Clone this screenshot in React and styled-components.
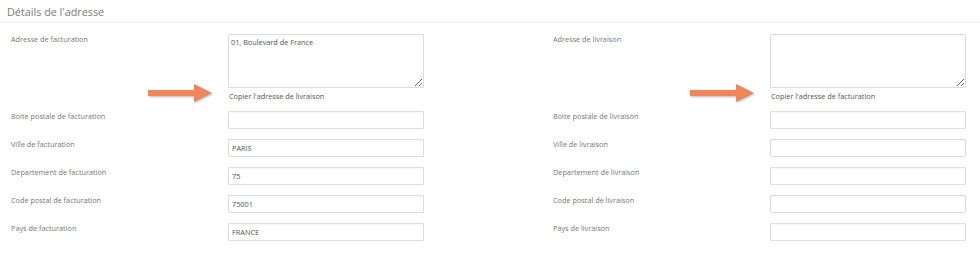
import React from 'react';
import styled, { createGlobalStyle } from 'styled-components';

const GlobalStyle = createGlobalStyle`
  html, body {
    margin: 0;
    padding: 0;
    background: #ffffff;
    font-family: "Open Sans", "Liberation Sans", sans-serif;
  }
`;

const Panel = styled.div`
  width: 980px;
  background: #fff;
`;

const Heading = styled.div`
  height: 23px;
  box-sizing: border-box;
  padding: 4px 0 0 7px;
  font-size: 10.8px;
  line-height: 15px;
  color: #7a7a7a;
  border-bottom: 1px solid #eeeeee;
`;

const Columns = styled.div`
  display: grid;
  grid-template-columns: 542px 1fr;
  padding-top: 11px;
`;

const Column = styled.div`
  display: flex;
  flex-direction: column;
  gap: 10px;
`;

const Row = styled.div`
  display: grid;
  grid-template-columns: 217px 196px;
  padding-left: 11px;
  align-items: start;
`;

const Label = styled.div`
  font-size: 7.3px;
  line-height: 10px;
  color: #777777;
`;

const Field = styled.div`
  position: relative;
  display: flex;
  flex-direction: column;
`;

const TextArea = styled.textarea`
  box-sizing: border-box;
  width: 196px;
  height: 54px;
  margin: 0;
  padding: 2px 2px;
  border: 1px solid #dcdcdc;
  border-radius: 1px;
  font-family: "Open Sans", "Liberation Sans", sans-serif;
  font-size: 7.3px;
  line-height: 10px;
  color: #555;
  resize: vertical;
  outline: none;
`;

const Input = styled.input`
  box-sizing: border-box;
  width: 196px;
  height: 18px;
  margin: 0;
  padding: 0 3px;
  border: 1px solid #dcdcdc;
  border-radius: 1px;
  box-shadow: inset 0 1px 1px rgba(0, 0, 0, 0.03);
  font-family: "Open Sans", "Liberation Sans", sans-serif;
  font-size: 7.3px;
  color: #555;
  outline: none;
`;

const CopyLink = styled.div`
  position: relative;
  margin-top: 3px;
  padding-left: 1px;
  font-size: 7.3px;
  line-height: 10px;
  color: #555555;
  cursor: pointer;
`;

const Arrow = styled.svg`
  position: absolute;
  right: calc(100% + 16px);
  top: -7px;
  width: 64px;
  height: 18px;
  overflow: visible;
  filter: drop-shadow(1px 1px 1px rgba(0, 0, 0, 0.28));
`;

function PointerArrow() {
  return (
    <Arrow viewBox="0 0 64 18">
      <rect x="0" y="6" width="47" height="6" fill="#f0845a" />
      <polygon points="46,0 64,9 46,18" fill="#f0845a" />
    </Arrow>
  );
}

const billing = {
  address: '01, Boulevard de France',
  copy: "Copier l'adresse de livraison",
  label: "Adresse de facturation",
  fields: [
    ['Boite postale de facturation', ''],
    ['Ville de facturation', 'PARIS'],
    ['Departement de facturation', '75'],
    ['Code postal de facturation', '75001'],
    ['Pays de facturation', 'FRANCE'],
  ],
};

const shipping = {
  address: '',
  copy: "Copier l'adresse de facturation",
  label: "Adresse de livraison",
  fields: [
    ['Boite postale de livraison', ''],
    ['Ville de livraison', ''],
    ['Departement de livraison', ''],
    ['Code postal de livraison', ''],
    ['Pays de livraison', ''],
  ],
};

function AddressColumn({ data }) {
  return (
    <Column>
      <Row>
        <Label>{data.label}</Label>
        <Field>
          <TextArea defaultValue={data.address} />
          <CopyLink>
            <PointerArrow />
            {data.copy}
          </CopyLink>
        </Field>
      </Row>
      {data.fields.map(([label, value]) => (
        <Row key={label}>
          <Label>{label}</Label>
          <Input type="text" defaultValue={value} />
        </Row>
      ))}
    </Column>
  );
}

export default function App() {
  return (
    <>
      <GlobalStyle />
      <Panel>
        <Heading>Détails de l'adresse</Heading>
        <Columns>
          <AddressColumn data={billing} />
          <AddressColumn data={shipping} />
        </Columns>
      </Panel>
    </>
  );
}
